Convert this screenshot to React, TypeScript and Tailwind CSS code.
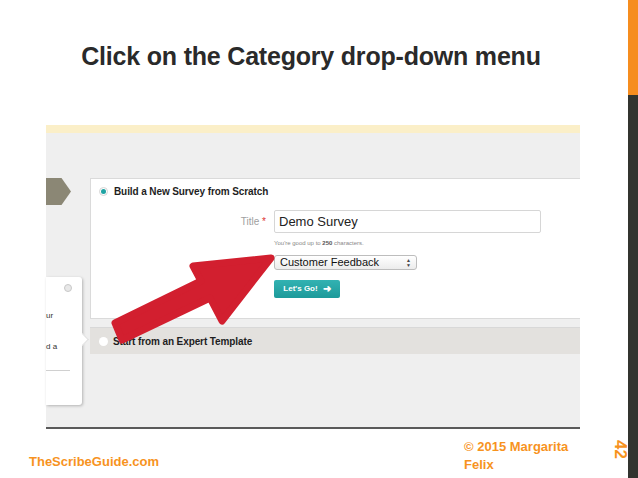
import React from 'react'

const Arrow = () => (
  <svg className="absolute left-0 top-0 pointer-events-none" width={638} height={478} viewBox="0 0 638 478">
    <polygon
      points="115,323 201,281 193,266 271,258 222,321 210,298 122,340"
      fill="#d21f2f"
      stroke="#d21f2f"
      strokeWidth={7}
      strokeLinejoin="round"
    />
  </svg>
)

const App = () => {
  return (
    <div className="relative w-[638px] h-[478px] flex bg-white font-['Liberation_Sans',Arial,sans-serif] overflow-hidden">
      <div className="w-[628px] flex flex-col">
        <div className="h-[125px] pt-[41px] pr-[6px] text-center">
          <h1 className="text-[25px] leading-[30px] font-bold text-[#2a2a2a] tracking-[-0.2px]">Click on the Category drop-down menu</h1>
        </div>

        {/* screenshot */}
        <div className="ml-[46px] w-[534px] h-[304px] flex flex-col">
          <div className="h-[8px] bg-[#fbefc8]" />
          <div className="flex-1 bg-[#efefef] border-b-2 border-[#5a5a5a] flex pt-[45px]">
            <div className="w-[44px] flex flex-col">
              <div className="w-[25px] h-[27px] bg-[#8b8775] [clip-path:polygon(0_0,62%_0,100%_50%,62%_100%,0_100%)]" />
              <div className="relative mt-[72px] w-[36px] h-[128px] bg-white rounded-r-[3px] shadow-[1px_1px_3px_rgba(0,0,0,0.25)] text-[8px] text-[#333] flex flex-col">
                <div className="flex justify-end pr-[10px] pt-[7px]">
                  <div className="w-[8px] h-[8px] rounded-full border border-[#c8c8c8] bg-[#e8e8e8]" />
                </div>
                <div className="mt-[19px] leading-[10px]">ur</div>
                <div className="mt-[21px] leading-[10px]">d a</div>
                <div className="mt-[18px] w-[24px] h-px bg-[#d0d0d0]" />
                <div className="absolute right-[-5px] top-[58px] w-[9px] h-[9px] bg-white rotate-45 border-t border-r border-[#dedede]" />
              </div>
            </div>

            <div className="flex-1 flex flex-col">
              <div className="h-[141px] bg-white border border-r-0 border-[#dadada] flex flex-col">
                <div className="flex items-center gap-[6px] pl-[8px] pt-[5px]">
                  <div className="w-[9px] h-[9px] rounded-full bg-white border border-[#d4d4d4] flex items-center justify-center">
                    <div className="w-[5px] h-[5px] rounded-full bg-[#1fa3a3]" />
                  </div>
                  <span className="text-[10px] font-bold text-[#1e1e1e] tracking-[-0.1px]">Build a New Survey from Scratch</span>
                </div>
                <div className="flex items-center mt-[11px]">
                  <div className="w-[175px] text-right text-[10px] text-[#a0a0a0]">Title <span className="text-[#d33]">*</span></div>
                  <div className="ml-[8px] w-[267px] h-[23px] border border-[#d6d6d6] rounded-[2px] flex items-center pl-[4px] text-[13px] text-[#222]">Demo Survey</div>
                </div>
                <div className="ml-[183px] mt-[6px] text-[6px] text-[#888]">You're good up to <b className="text-[#555]">250</b> characters.</div>
                <div className="ml-[183px] mt-[7px] w-[143px] h-[15px] border border-[#bdbdbd] rounded-[3px] bg-gradient-to-b from-white to-[#ececec] flex items-center justify-between px-[5px] text-[11px] text-[#111]">
                  <span>Customer Feedback</span>
                  <span className="flex flex-col text-[5px] leading-[5px] text-[#444]">
                    <span>▲</span>
                    <span>▼</span>
                  </span>
                </div>
                <div className="ml-[183px] mt-[10px] w-[66px] h-[18px] rounded-[2px] bg-gradient-to-b from-[#32b2b2] to-[#1c9a9a] flex items-center justify-center gap-[5px] text-white text-[8px] font-bold">
                  <span>Let's Go!</span>
                  <span className="text-[10px] leading-none">➜</span>
                </div>
              </div>
              <div className="mt-[8px] h-[27px] bg-[#e3e1de] border-t border-[#d8d8d8] flex items-center gap-[5px] pl-[9px]">
                <div className="w-[9px] h-[9px] rounded-full bg-white" />
                <span className="text-[10px] font-bold text-[#1e1e1e] tracking-[-0.1px]">Start from an Expert Template</span>
              </div>
            </div>
          </div>
        </div>

        {/* footer */}
        <div className="flex-1 flex text-[#f7931e] font-bold text-[13px] leading-[18px]">
          <div className="pl-[29px] pt-[24px]">TheScribeGuide.com</div>
          <div className="ml-[305px] pt-[9px]">
            <div>© 2015 Margarita</div>
            <div>Felix</div>
          </div>
          <div className="ml-auto pt-[11px] w-[16px] flex justify-center">
            <span className="[writing-mode:vertical-rl] text-[17px] leading-[16px]">42</span>
          </div>
        </div>
      </div>
      <div className="w-[10px] flex flex-col">
        <div className="h-[95px] bg-[#f68d1f]" />
        <div className="flex-1 bg-[#32342f]" />
      </div>
      <Arrow />
    </div>
  )
}

export default App
